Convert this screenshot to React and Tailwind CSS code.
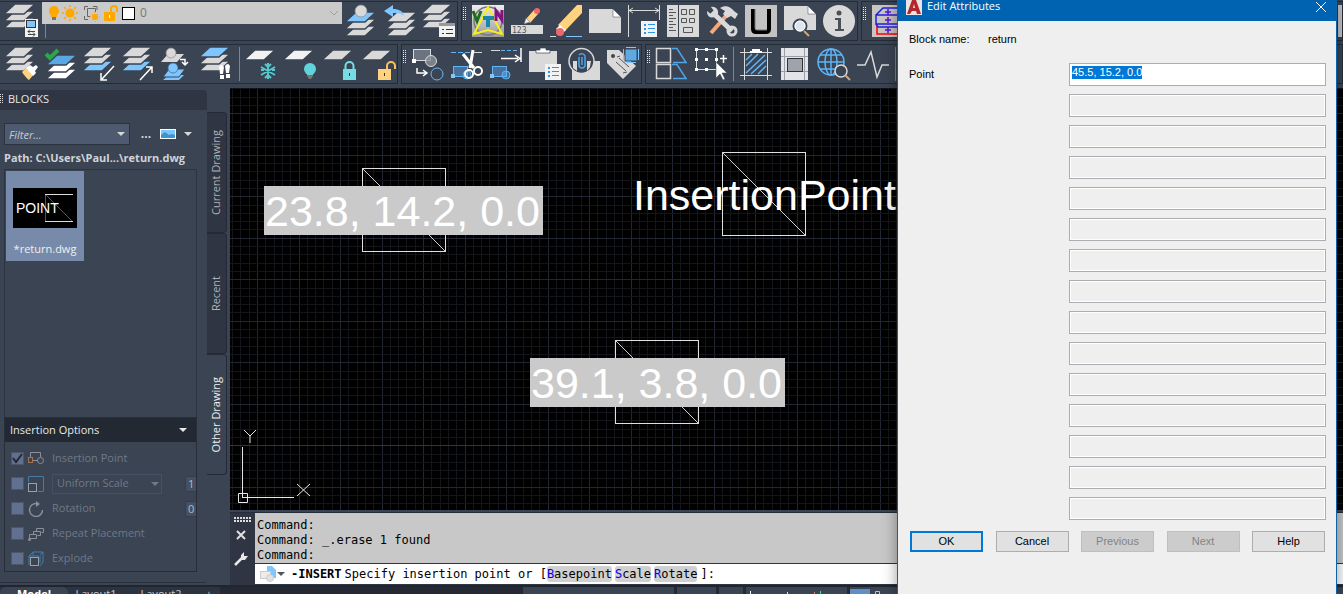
import { useState } from 'react';

const LIGHT = '#d9d9d9';
const BLUE = '#7fc6ff';
const BG = '#3b4453';

function Icon({ children }) {
    return (
        <svg viewBox="0 0 32 32" className="size-8 overflow-visible" fill="none">
            {children}
        </svg>
    );
}

function Sheet({ y, fill, x = 0 }) {
    return (
        <polygon
            points={`${x + 9},${y - 1} ${x + 29},${y - 1} ${x + 18},${y + 9} ${x - 2},${y + 9}`}
            fill={fill}
            stroke={BG}
            strokeWidth="1.5"
        />
    );
}

// three stacked sheets, drawn from the lowest one up
function Stack({ colors = [LIGHT, LIGHT, LIGHT], x = 0, y = 0 }) {
    return [2, 1, 0].map((i) => <Sheet key={i} x={x} y={y + i * 7} fill={colors[i]} />);
}

function List({ x, y, accent = '#2b95e8' }) {
    return (
        <g>
            <rect x={x} y={y} width="16" height="16" fill="#f2f2f2" />
            {[4, 8, 12].map((d) => (
                <g key={d} fill={accent}>
                    <rect x={x + 3} y={y + d - 1} width="2" height="2" />
                    <rect x={x + 7} y={y + d - 1} width="7" height="1" />
                </g>
            ))}
        </g>
    );
}

const LayerProps = (
    <Icon>
        <Stack />
        <rect x="19" y="14" width="13" height="18" fill="#f2f2f2" />
        <rect x="20.500" y="15.500" width="9" height="7" fill={BLUE} stroke="#333" />
        <path d="M22 26.500h7M22 29.500h7M24 24.500l-2 2 2 2M27 27.500l2 2-2 2" stroke="#444" />
    </Icon>
);

const row1a = [
    ['Make object\'s layer current', (
        <Icon>
            <Stack y={8} colors={[BLUE, LIGHT, LIGHT]} x={2} />
            <circle cx="16" cy="6" r="6" fill={LIGHT} stroke="#8a8a8a" strokeWidth=".7" />
        </Icon>
    )],
    ['Layer previous', (
        <Icon>
            <Stack x={4} y={8} />
            <path d="M0 6l9-6v4c6 0 10 2 11 7-3-3-6-3-11-3v4z" fill={BLUE} />
        </Icon>
    )],
    ['Layer states manager', (
        <Icon>
            <Stack />
            <rect x="16" y="18" width="16" height="14" fill="#f2f2f2" />
            <rect x="16" y="18" width="16" height="3" fill="#999" />
            <path d="M19 24.500h2M23 24.500h7M19 28.500h2M23 28.500h7" stroke="#333" />
        </Icon>
    )],
];

const row1b = [
    ['VTN', (
        <Icon>
            <defs>
                <linearGradient id="vtn" x2="0" y2="1">
                    <stop stopColor="#eee" />
                    <stop offset="1" stopColor="#999" />
                </linearGradient>
            </defs>
            <rect width="32" height="32" fill="url(#vtn)" />
            <circle cx="16" cy="16" r="14" stroke="#777" strokeWidth="1.5" />
            <path d="M16 2L30 29 16 25 2 29z" stroke="#f5ef22" strokeWidth="2" />
            <path d="M1 6l4 10L9 6" stroke="#1d6b1d" strokeWidth="3" />
            <path d="M11 13h11M16 13v9" stroke="#1b87a8" strokeWidth="4" />
            <path d="M24 16V6l6 9V5" stroke="#84117f" strokeWidth="3" />
        </Icon>
    )],
    ['Auto number', (
        <Icon>
            <rect y="20" width="32" height="9" fill={LIGHT} />
            <text x="1" y="28" fontSize="8" fontFamily="DejaVu Sans Mono, monospace" fill="#555">123</text>
            <path d="M15 14L23 5l4 4-8 9z" fill="#ffd27f" />
            <path d="M13 19l2-6 4 4z" fill="#eee" stroke="#666" strokeWidth=".5" />
            <circle cx="26" cy="6" r="3" fill="#f0676b" />
        </Icon>
    )],
    ['Erase', (
        <Icon>
            <path d="M32 0v8L15 26l-7-6L27 0z" fill="#ffd27f" />
            <path d="M10 20l6 5-4 4-6-5z" fill="#fff" />
            <circle cx="10" cy="27" r="4" fill="#f0676b" />
            <path d="M0 31.500h6" stroke={LIGHT} />
            <path d="M16 31.500h16" stroke={BLUE} />
        </Icon>
    )],
    ['Wipeout', (
        <Icon>
            <path d="M0 4h24v8h8v16H0z" fill={LIGHT} />
            <path d="M24 4l8 8h-8z" fill="#fff" stroke={BG} strokeWidth=".5" />
        </Icon>
    )],
    ['Dimension style', (
        <Icon>
            <path d="M.5 0v32M31.500 0v15M1 5.500h30M5 3L1 5.500 5 8M27 3l4 2.500L27 8" stroke={LIGHT} />
            <List x={13} y={16} />
        </Icon>
    )],
    ['Design center', (
        <Icon>
            <rect width="11" height="32" fill={LIGHT} />
            <rect x="12" width="20" height="32" fill={LIGHT} />
            <path d="M2 4.500h4M2 7.500h7M2 10.500h4M2 13.500h7M2 16.500h4M2 19.500h7M2 22.500h4M2 25.500h7" stroke="#555" />
            <path d="M14.500 4.500h5v5h-5zM22.500 4.500h5v5h-5zM14.500 13.500h5v4h-5zM22.500 13.500h5v4h-5zM16.500 22.500h9v5h-9z" stroke="#555" />
        </Icon>
    )],
    ['Tools', (
        <Icon>
            <path d="M5 28L20 11" stroke="#f7a87a" strokeWidth="4" />
            <path d="M14 3c5-3 10-2 14 3l4 3-3 5-4-3-4 2-4-4 2-3z" fill={LIGHT} />
            <path d="M6 7L26 26" stroke={LIGHT} strokeWidth="5" />
            <path d="M1 6c0 7 5 7 8 6l3-3c1-5-3-8-7-7l3 4-3 3z" fill={LIGHT} />
            <circle cx="26" cy="26" r="4" stroke={LIGHT} strokeWidth="3" />
        </Icon>
    )],
    ['Undo marks', (
        <Icon>
            <rect width="32" height="32" fill="#c3c3c3" />
            <path d="M8 4v20q0 3 3 3h10q3 0 3-3V4" stroke="#000" strokeWidth="4" />
            <path d="M10 4v19q0 2 2 2h10" stroke="#777" />
        </Icon>
    )],
    ['Find', (
        <Icon>
            <path d="M0 1h24v8h8v16H0z" fill={LIGHT} />
            <path d="M24 1l8 8h-8z" fill="#fff" stroke={BG} strokeWidth=".5" />
            <circle cx="16" cy="21" r="6.500" fill="#dce6ee" stroke={BG} strokeWidth="2" />
            <circle cx="16" cy="21" r="5" stroke="#fff" />
            <path d="M20 26l5 5" stroke="#cda87c" strokeWidth="2" />
        </Icon>
    )],
    ['Information', (
        <Icon>
            <circle cx="16" cy="16" r="16" fill={LIGHT} />
            <circle cx="16" cy="8" r="2.500" fill="#4d5057" />
            <path d="M12 13h6v11h3v2h-9v-2h3v-9h-3z" fill="#4d5057" />
        </Icon>
    )],
];

const Block3d = (
    <Icon>
        <rect width="32" height="32" fill="#c9c5c4" />
        <path d="M5 21V29h26V21" stroke="#f00" strokeWidth="1.500" />
        <path d="M4 10h27v9H4zM4 10l7-7h20M4 19l2 3h25" stroke="#2020e0" strokeWidth="1.500" />
        <path d="M13 7h6M16 4v6M13 15h6M16 12v6M13 25h6M16 22v6" stroke="#5a10e0" strokeWidth="1.500" />
    </Icon>
);

const row2a = [
    ['Layer match', (
        <Icon>
            <Stack />
            <path d="M16 24l6-6 7 7-6 7c-2-1-5-5-7-8z" fill="#ffd27f" />
            <path d="M20 20l4-3 3 2 3-2 2 2-3 4 1 2-3 3z" fill="#fff" />
        </Icon>
    )],
    ['Make current', (
        <Icon>
            <Stack x={3} y={8} colors={['#5aa7e6', '#fff', '#fff']} />
            <path d="M1 6l4 4 8-8" stroke="#27a849" strokeWidth="4" />
        </Icon>
    )],
    ['Copy to layer', (
        <Icon>
            <Stack colors={[LIGHT, LIGHT, BLUE]} />
            <path d="M30 18L18 31M17 25v7h6" stroke="#fff" strokeWidth="1.500" />
        </Icon>
    )],
    ['Move from layer', (
        <Icon>
            <Stack colors={[LIGHT, LIGHT, BLUE]} />
            <path d="M17 32L29 19M23 19h6v6" stroke="#fff" strokeWidth="1.500" />
        </Icon>
    )],
    ['Change to current layer', (
        <Icon>
            <path d="M6 6h16l-7 8H-1z" fill={LIGHT} />
            <circle cx="9" cy="5" r="5" fill={LIGHT} stroke="#888" strokeWidth=".7" />
            <path d="M18 11.500h5v5M20 14l3 3 3-3" stroke="#fff" strokeWidth="1.500" />
            <path d="M7 27h15l-5 5H1z" fill={BLUE} />
            <path d="M7 21h16l-6 8H1z" fill={BLUE} stroke={BG} />
            <circle cx="11" cy="20" r="5" fill={BLUE} stroke="#35688f" strokeWidth=".7" />
        </Icon>
    )],
    ['Layer walk', (
        <Icon>
            <Stack colors={[BLUE, LIGHT, LIGHT]} />
            <path d="M18 19q2-4 5 0l-1 7h-3zM24 18q3-4 5 0l-1 7h-3zM19 27h4v4h-4zM25 26h4v4h-4z" fill="#fff" />
        </Icon>
    )],
];

const row2b = [
    ['Freeze layer', (
        <Icon>
            <Sheet y={3} fill="#f2f2f2" />
            <path d="M22 15v16M15 19l14 8M15 27l14-8M19 16l3 3 3-3M19 30l3-3 3 3M15 22h3M26 22h3" stroke="#58c7cc" strokeWidth="2" />
        </Icon>
    )],
    ['Turn layer off', (
        <Icon>
            <Sheet y={3} fill="#f2f2f2" />
            <circle cx="25" cy="21" r="6" fill="#5fd4dc" />
            <path d="M22 25h6v3l-2 3h-2l-2-3z" fill="#777" />
            <path d="M22 25h6v2h-6z" fill="#5fd4dc" />
        </Icon>
    )],
    ['Lock layer', (
        <Icon>
            <Sheet y={3} fill={LIGHT} />
            <rect x="19" y="21" width="13" height="11" fill="#76dde4" />
            <path d="M21.500 21v-3a4 4 0 018 0v3" stroke="#76dde4" strokeWidth="2" />
            <path d="M25.500 25v3" stroke="#333" />
        </Icon>
    )],
    ['Unlock layer', (
        <Icon>
            <Sheet y={3} fill={LIGHT} />
            <rect x="15" y="21" width="13" height="11" fill="#ffd27f" />
            <path d="M24 21v-3a4 4 0 018 0v3" stroke="#ffc15a" strokeWidth="2" />
            <path d="M21.500 25v3" stroke="#333" />
        </Icon>
    )],
];

const ShapePair = (
    <g>
        <rect x="2.500" y="18.500" width="14" height="10" fill="#4b6f9b" stroke="#5fb5f5" />
        <circle cx="16" cy="27" r="4" fill="#5fb5f5" fillOpacity=".4" stroke="#5fb5f5" />
        <rect y="26" width="4" height="4" fill={BLUE} />
    </g>
);

const row2c = [
    ['Replace block', (
        <Icon>
            <rect x="1.500" y="1.500" width="17" height="11" fill="#6b7380" stroke={LIGHT} />
            <circle cx="19" cy="13" r="5.500" fill="#8a919c" fillOpacity=".8" stroke={LIGHT} />
            <rect y="11" width="4" height="4" fill="#fff" />
            <path d="M5 20v5h9M11 22l4 3-4 3" stroke="#fff" strokeWidth="1.500" />
            <circle cx="25" cy="26" r="6" stroke="#6bb9f5" />
        </Icon>
    )],
    ['Clip reference', (
        <Icon>
            <path d="M0 4.500h20" stroke="#5fb5f5" strokeDasharray="5 2" />
            <path d="M22 4.500h9" stroke={LIGHT} />
            {ShapePair}
            <path d="M12 6l11 14M22 2l-3 18" stroke="#fff" strokeWidth="3" />
            <circle cx="27" cy="23" r="4" stroke="#fff" strokeWidth="2" />
            <circle cx="18" cy="26" r="4" stroke="#fff" strokeWidth="2" />
        </Icon>
    )],
    ['Align block', (
        <Icon>
            <path d="M1 2.500h9" stroke={LIGHT} />
            <path d="M11 2.500h18" stroke="#5fb5f5" strokeDasharray="4 2" />
            <path d="M31 0v14M11 10.500h17M25 7l5 3.500-5 3.500" stroke="#fff" strokeWidth="1.500" />
            {ShapePair}
        </Icon>
    )],
    ['Paste special', (
        <Icon>
            <path d="M0 3h28v21H0z" fill={LIGHT} />
            <path d="M7 5V2h4V0h6v2h4v3z" fill="#fff" stroke={BG} strokeWidth=".7" />
            <List x={16} y={16} />
        </Icon>
    )],
    ['Attach', (
        <Icon>
            <path d="M4 13h28v19H4z" fill={LIGHT} />
            <circle cx="13.500" cy="13" r="12.500" fill={BG} stroke={LIGHT} strokeWidth="1.500" />
            <path d="M5 13h4v10l-4-3zM19 13h4l-1 6-3 4z" fill={LIGHT} />
            <path d="M11 9v8a3 3 0 006 0V8a3.500 3.500 0 00-6-1M14 9v8" stroke="#4ea4e6" strokeWidth="1.500" />
        </Icon>
    )],
    ['Tag', (
        <Icon>
            <path d="M0 2h12l17 16-13 13L0 15z" fill={LIGHT} />
            <circle cx="6" cy="8" r="2" fill="#444" />
            <path d="M12 10l10 9M9 14l10 9M10 9l3-1M16 25l4-1" stroke="#555" />
            <rect x="18" y="1" width="12" height="12" fill="#5fa9e3" stroke={BG} />
            <path d="M16.500 1v11M31.500 1v11M19 -.5h10M19 14.500h10" stroke={BLUE} />
        </Icon>
    )],
];

const row2d = [
    ['Quick view', (
        <Icon>
            <path d="M.5 .5h14v14H.5zM.5 16.500h14v14H.5z" stroke={LIGHT} strokeWidth="1.500" />
            <path d="M16 .5h5l9 14H17M16 16.500h5l9 14H17" stroke="#4ea4e6" strokeWidth="1.500" />
        </Icon>
    )],
    ['Select region', (
        <Icon>
            <rect x="1.500" y="1.500" width="20" height="20" stroke={LIGHT} />
            <path d="M0 0h3v3H0zM10 0h3v3h-3zM20 0h3v3h-3zM0 10h3v3H0zM0 20h3v3H0zM10 20h3v3h-3zM10 10h3v3h-3zM20 10h3v3h-3z" fill="#fff" />
            <path d="M28.500 7v8M25 10.500h7" stroke="#fff" strokeWidth="1.500" />
            <path d="M21 14v16l4-4 3 6 2-1-3-6h5z" fill="#fff" stroke={BG} strokeWidth=".5" />
        </Icon>
    )],
];

const row2e = [
    ['Hatch clip', (
        <Icon>
            <path d="M4.500 0v32M27.500 0v32M0 4.500h32M0 27.500h32" stroke={LIGHT} />
            <path d="M6 12l6-6M6 18L18 6M6 25L25 7M11 26l15-14M18 26l8-8" stroke="#5fb5f5" strokeWidth="1.500" />
            <path d="M10 5V3h2V1h8v2h2v2z" fill="#fff" />
        </Icon>
    )],
    ['Viewport', (
        <Icon>
            <rect x="2" width="27" height="32" fill="#e2e4e8" />
            <path d="M5.500 0v32M25.500 0v32M2 8.500h27M2 23.500h27" stroke="#9a9ea6" />
            <rect x="8.500" y="10.500" width="15" height="13" fill="#9ea3ac" stroke="#333" />
        </Icon>
    )],
    ['Geographic location', (
        <Icon>
            <g stroke="#5fb5f5" strokeWidth="1.500">
                <circle cx="13" cy="14" r="13" />
                <ellipse cx="13" cy="14" rx="6" ry="13" />
                <path d="M13 1v26M0 14h26M2 7h22M2 21h22" />
            </g>
            <circle cx="23" cy="23" r="6" fill={BG} stroke={LIGHT} strokeWidth="1.500" />
            <path d="M27 27l5 5" stroke="#d0a878" strokeWidth="2" />
        </Icon>
    )],
    ['Signal', (
        <Icon>
            <path d="M0 17h8l6-13 6 25 5-12h7" stroke={LIGHT} strokeWidth="1.500" />
        </Icon>
    )],
];

function ToolButtons({ items }) {
    return (
        <div className="flex gap-[7px]">
            {items.map(([label, icon]) => (
                <button key={label} type="button" aria-label={label} title={label} className="shrink-0">
                    {icon}
                </button>
            ))}
        </div>
    );
}

function Grip() {
    return (
        <svg viewBox="0 0 3 15" className="w-[3px] h-[15px] mb-[14px] shrink-0">
            {[0, 2, 4, 6, 8, 10, 12].map((y) => (
                <path key={y} d={`M0 ${y + 0.5}h1M2 ${y + 0.5}h1`} stroke="#e6e6e6" />
            ))}
        </svg>
    );
}

function Divider() {
    return <div className="w-px h-[34px] bg-[#7c8594] shrink-0" />;
}

function Toolbar({ children, className = '' }) {
    return (
        <div className={`flex items-center h-10 border border-[#242c38] ${className}`}>
            {children}
        </div>
    );
}

function LayerSelect() {
    return (
        <div className="self-stretch w-[300px] shrink-0 ml-1 mr-[3px]">
            <button type="button" aria-label="Layer" className="flex items-center w-full h-[22px] pl-[6px] bg-[#cacaca] text-[#777]">
                <svg viewBox="0 0 88 18" className="w-[88px] h-[18px]" fill="none">
                    <circle cx="6" cy="7" r="5" fill="#ffa800" />
                    <path d="M3 10h6v3H3z" fill="#ffa800" />
                    <path d="M4 13h4v3H4z" fill="#777" />
                    <circle cx="22" cy="9" r="4.500" fill="#ffa800" />
                    <path d="M22 1v2M22 15v2M14 9h2M28 9h2M16 3l2 2M28 3l-2 2M16 15l2-2M28 15l-2-2" stroke="#ffa800" strokeWidth="1.500" />
                    <path d="M36.500 6V2.500H40M45 2.500h4V6M36.500 12v3.500H40" stroke="#666" />
                    <path d="M47.500 8V4.500h-8v8H42" stroke="#666" />
                    <circle cx="47" cy="13" r="3" fill="#ffa800" />
                    <path d="M47 8v1M47 17v1M42 13h1M51 13h1M44 10l1 1M50 10l-1 1M44 16l1-1M50 16l-1-1" stroke="#ffa800" />
                    <rect x="56" y="8" width="11" height="9" fill="#ffa800" />
                    <path d="M63 8V5a3 3 0 016 0v3" stroke="#ffa800" strokeWidth="2" />
                    <path d="M61.500 11v3" stroke="#fff" />
                    <rect x="74.500" y="3.500" width="12" height="12" fill="#fff" stroke="#000" />
                </svg>
                <span className="ml-1 text-xs">0</span>
                <svg viewBox="0 0 8 6" className="w-2 h-[6px] ml-auto mr-1" fill="none">
                    <path d="M0 1l4 4 4-4" stroke="#a0a0a0" />
                </svg>
            </button>
            <div className="w-px h-[14px] ml-[3px] bg-[#7c8594]" />
        </div>
    );
}

function Toolbars() {
    return (
        <div className="flex flex-col gap-[3px] pt-px overflow-hidden">
            <div className="flex gap-[3px]">
                <Toolbar className="pl-[6px] pr-[2px] shrink-0 border-l-0">
                    <button type="button" aria-label="Layer properties" className="shrink-0">{LayerProps}</button>
                    <LayerSelect />
                    <ToolButtons items={row1a} />
                </Toolbar>
                <Toolbar className="pl-px pr-[2px] gap-[6px] shrink-0">
                    <Grip />
                    <ToolButtons items={row1b} />
                </Toolbar>
                <Toolbar className="pl-px gap-[6px] flex-1">
                    <Grip />
                    {Block3d}
                    <div className="ml-auto w-[6px] h-8 bg-[#c9c5c4] border-l-2 border-[#2020e0]" />
                </Toolbar>
            </div>
            <div className="flex gap-[3px]">
                <Toolbar className="pl-[6px] pr-[2px] gap-[6px] shrink-0 border-l-0">
                    <ToolButtons items={row2a} />
                    <Divider />
                    <ToolButtons items={row2b} />
                </Toolbar>
                <Toolbar className="pl-px pr-[2px] gap-[6px] shrink-0">
                    <Grip />
                    <ToolButtons items={row2c} />
                </Toolbar>
                <Toolbar className="pl-px gap-[6px] flex-1">
                    <Grip />
                    <ToolButtons items={row2d} />
                    <Divider />
                    <ToolButtons items={row2e} />
                    <Divider />
                </Toolbar>
            </div>
        </div>
    );
}

function Caret({ className = '' }) {
    return (
        <svg viewBox="0 0 8 4" className={`w-2 h-1 shrink-0 ${className}`}>
            <path d="M0 0h8L4 4z" fill="currentColor" />
        </svg>
    );
}

const optionIcons = {
    point: (
        <svg viewBox="0 0 16 16" className="size-4" fill="none">
            <path d="M2.500 7V1.500h10V6M5 9.500h5" stroke="#8a8f98" />
            <rect x=".5" y="6.500" width="4" height="5" stroke="#a5714f" />
            <circle cx="12.500" cy="9.500" r="3" stroke="#8a8f98" />
        </svg>
    ),
    scale: (
        <svg viewBox="0 0 16 16" className="size-4" fill="none">
            <path d="M.5 6V.5h15v15H10" stroke="#477ca5" />
            <rect x=".5" y="7.500" width="8" height="8" stroke="#9aa0a8" />
        </svg>
    ),
    rotation: (
        <svg viewBox="0 0 16 16" className="size-4" fill="none">
            <path d="M9 2.500A6.500 6.500 0 1014.500 9" stroke="#8a8f98" strokeWidth="1.500" />
            <path d="M8 0l4 3-4 3z" fill="#8a8f98" />
        </svg>
    ),
    repeat: (
        <svg viewBox="0 0 16 16" className="size-4" fill="none">
            <path d="M1.500 13V8.500h7v4h-7M5.500 8V5.500h7v4h-3M8.500 5V2.500h7v4h-2" stroke="#8a8f98" />
            <circle cx="1.500" cy="13.500" r="1.500" fill="#8a8f98" />
        </svg>
    ),
    explode: (
        <svg viewBox="0 0 16 16" className="size-4" fill="none">
            <path d="M1 5l4-4h10v10l-3 4M5 1v3M12 4l3-3M12 5v7M1 14V5h10" stroke="#477ca5" />
            <rect x="2.500" y="6.500" width="8" height="8" stroke="#9aa0a8" />
        </svg>
    ),
};

function OptionRow({ id, label, checked = false, children }) {
    return (
        <div className="flex items-center h-[25px] pl-[6px] text-[#6f7988]">
            <span className="relative flex">
                <input
                    id={id}
                    type="checkbox"
                    defaultChecked={checked}
                    disabled
                    aria-label={label}
                    className="peer appearance-none size-[13px] bg-[#617090] border border-[#4b566b]"
                />
                <svg viewBox="0 0 13 13" className="absolute inset-0 hidden peer-checked:block" fill="none">
                    <path d="M2 6l3 4 6-8" stroke="#222933" strokeWidth="2" />
                </svg>
            </span>
            <span className="ml-1">{optionIcons[id]}</span>
            {children || <label htmlFor={id} className="ml-2">{label}</label>}
        </div>
    );
}

function NumberBox({ value, label }) {
    return (
        <div className="ml-auto w-[11px] h-4 overflow-hidden bg-[#465064] border border-r-0 border-[#343d4b]">
            <input aria-label={label} defaultValue={value} disabled className="block w-6 pl-[2px] leading-[14px] text-[#b5bbc5]" />
        </div>
    );
}

function InsertionOptions() {
    return (
        <section className="border border-[#272e3a]">
            <button type="button" className="flex items-center w-full h-6 pl-[5px] pr-[9px] bg-[#222933] text-[#e8e8e8]">
                Insertion Options
                <Caret className="ml-auto" />
            </button>
            <div className="pt-1">
                <OptionRow id="point" label="Insertion Point" checked />
                <OptionRow id="scale" label="Scale">
                    <div className="relative ml-2">
                        <select disabled aria-label="Scale mode" className="appearance-none w-[110px] h-5 pl-1 border border-[#465064] opacity-100">
                            <option>Uniform Scale</option>
                        </select>
                        <Caret className="absolute right-[3px] top-2 pointer-events-none" />
                    </div>
                    <NumberBox value="1" label="Scale factor" />
                </OptionRow>
                <OptionRow id="rotation" label="Rotation">
                    <label htmlFor="rotation" className="ml-2">Rotation</label>
                    <NumberBox value="0" label="Rotation angle" />
                </OptionRow>
                <OptionRow id="repeat" label="Repeat Placement" />
                <OptionRow id="explode" label="Explode" />
            </div>
        </section>
    );
}

function BlocksPanel() {
    const [filter, setFilter] = useState('');

    return (
        <div className="flex flex-col w-[207px] text-[11px] border-b border-[#2a313d] rounded-br-[4px]">
            <header className="flex items-center h-5 pb-[2px] gap-[5px] bg-[#2f3542] text-[#e8e8e8] rounded-tr-[4px]">
                <svg viewBox="0 0 3 10" className="w-[3px] h-[10px]">
                    <path d="M.5 0v10M2.500 0v10" stroke="#ddd" strokeDasharray="1 1" />
                </svg>
                <h2>BLOCKS</h2>
            </header>
            <div className="flex flex-col flex-1 pl-1 pr-[10px] pt-[13px] pb-[10px]">
                <div className="flex items-center text-[#d8d8d8]">
                    <div className="relative">
                        <input
                            type="text"
                            aria-label="Filter"
                            placeholder="Filter..."
                            value={filter}
                            onChange={(e) => setFilter(e.target.value)}
                            className="block w-[126px] h-[22px] pl-1 bg-[#4d5a70] border border-[#2b3340] italic placeholder:text-[#c6c9ce]"
                        />
                        <Caret className="absolute right-[5px] top-[9px]" />
                    </div>
                    <button type="button" className="ml-[10px] w-3 text-xs font-bold leading-4">...</button>
                    <button type="button" aria-label="View" className="flex items-center ml-2 gap-2">
                        <svg viewBox="0 0 16 10" className="w-4 h-[10px]">
                            <rect width="16" height="10" fill="#fff" />
                            <rect x="1" y="1" width="14" height="8" fill={BLUE} />
                            <path d="M1 6l4-3 4 3 3-1 3 1v3H1z" fill="#3a94d0" />
                        </svg>
                        <Caret />
                    </button>
                </div>
                <p className="mt-1 h-5 leading-[18px] font-bold whitespace-nowrap text-[#d0d3d8]">
                    Path: C:\Users\Paul...\return.dwg
                </p>
                <div className="flex-1 border border-b-0 border-[#2d3441] p-px">
                    <figure className="flex flex-col items-center w-[78px] h-[90px] pt-[17px] bg-[#778aa9] text-[#f0f0f0]">
                        <svg viewBox="0 0 64 40" className="w-16 h-10 bg-black" fill="none">
                            <path d="M32.500 6.500L60 34M32.500 7v27" stroke="#555" />
                            <path d="M32 6.500h28M32 33.500h28" stroke="#ddd" />
                            <text x="3" y="25" fontSize="14" fill="#fff" fontFamily="Liberation Sans, sans-serif">POINT</text>
                        </svg>
                        <figcaption className="mt-[13px]">*return.dwg</figcaption>
                    </figure>
                </div>
                <InsertionOptions />
            </div>
        </div>
    );
}

function SideTabs() {
    const tabs = ['Current Drawing', 'Recent', 'Other Drawing'];
    const [active, setActive] = useState('Other Drawing');

    return (
        <div role="tablist" className="flex flex-col w-5 pt-[22px] text-[11px]">
            {tabs.map((t) => (
                <button
                    key={t}
                    type="button"
                    role="tab"
                    aria-selected={t === active}
                    onClick={() => setActive(t)}
                    className={`flex items-center justify-center h-[121px] border border-l-0 border-[#242b37] rounded-r-[4px] ${
                        t === active ? 'text-[#f0f0f0]' : 'bg-[#2f3542] text-[#aeb2b9]'
                    }`}
                >
                    <span className="[writing-mode:vertical-rl] rotate-180 whitespace-nowrap">{t}</span>
                </button>
            ))}
        </div>
    );
}

const STEP = 8.3;
const gridLines = (start, count) =>
    Array.from({ length: count }, (_, i) => ({ at: Math.round(start + i * STEP) + 0.5, major: i % 5 === 0 }));
const columns = gridLines(-14.5, 170);
const rows = gridLines(-16.3, 90);

function BlockRef({ x, y, text, textX, width }) {
    return (
        <g>
            <rect x={x + 0.5} y={y + 0.5} width="83" height="83" stroke="#e0e0e0" />
            <path d={`M${x} ${y}l84 84`} stroke="#d0d0d0" />
            {width && <rect x={textX - 1} y={y + 18} width={width} height="49" fill="#cacaca" />}
            <text x={textX} y={y + 58} fontSize="43" fill="#fff" fontFamily="Liberation Sans, sans-serif">
                {text}
            </text>
        </g>
    );
}

function Drawing() {
    return (
        <div className="relative flex-1 bg-black overflow-hidden">
            <svg className="absolute inset-0 w-full h-full" fill="none">
                {columns.map((l) => (
                    <line key={l.at} x1={l.at} x2={l.at} y1="0" y2="100%" stroke={l.major ? '#232734' : '#14151a'} />
                ))}
                {rows.map((l) => (
                    <line key={l.at} x1="0" x2="100%" y1={l.at} y2={l.at} stroke={l.major ? '#232734' : '#14151a'} />
                ))}
                <line x1="0" x2="100%" y1="357.500" y2="357.500" stroke="#6e1c20" />
                <BlockRef x={132} y={80} text="23.8, 14.2, 0.0" textX={35} width={279} />
                <BlockRef x={492} y={64} text="InsertionPoint" textX={403} />
                <BlockRef x={385} y={252} text="39.1, 3.8, 0.0" textX={301} width={255} />
            </svg>
            <svg viewBox="0 0 78 76" className="absolute left-[6px] bottom-[6px] w-[78px] h-[76px]" fill="none">
                <path d="M6.500 19v51M6 69.500h52M2.500 65.500h9v9h-9z" stroke="#e8e8e8" />
                <path d="M8 2l6 6 6-6M14 8v7M61 56l13 12M74 56L61 68" stroke="#e8e8e8" />
            </svg>
        </div>
    );
}

function Option({ name }) {
    return (
        <button type="button" className="h-4 leading-4 rounded-[3px] bg-[#d0d0d0] mr-[3px]">
            <span className="text-[#0000e6]">{name[0]}</span>
            {name.slice(1)}
        </button>
    );
}

function CommandLine() {
    return (
        <div className="flex h-[73px] mt-[2px] border-t border-[#242c38] bg-[#2f3542] font-['DejaVu_Sans_Mono',monospace] text-xs text-black">
            <div className="flex flex-col items-start w-[25px] pt-1 pl-1 text-white shrink-0">
                <svg viewBox="0 0 17 5" className="w-[17px] h-[5px]">
                    <path d="M0 1h17M0 4h17" stroke="#ddd" strokeWidth="2" strokeDasharray="2 1" />
                </svg>
                <button type="button" aria-label="Close" className="mt-2 ml-[2px]">
                    <svg viewBox="0 0 10 10" className="size-[10px]" fill="none">
                        <path d="M1 1l8 8M9 1L1 9" stroke="#e0e0e0" strokeWidth="2" />
                    </svg>
                </button>
                <button type="button" aria-label="Customize" className="mt-3">
                    <svg viewBox="0 0 14 14" className="size-[14px]" fill="none">
                        <path d="M1 13l7-7" stroke="#e8e8e8" strokeWidth="2.500" />
                        <path d="M7 3l3-3v4h4l-3 4H7z" fill="#e8e8e8" />
                    </svg>
                </button>
            </div>
            <div className="flex flex-col flex-1 min-w-0">
                <pre className="h-[50px] pt-[5px] pl-[2px] leading-[15px] bg-[#c8c8c8] font-['DejaVu_Sans_Mono',monospace]">
                    {'Command:\nCommand: _.erase 1 found\nCommand:'}
                </pre>
                <div className="flex items-center h-5 mt-px pl-[5px] bg-white whitespace-pre">
                    <svg viewBox="0 0 16 16" className="size-4" fill="none">
                        <path d="M7 0h5l4 4v8H7z" fill={BLUE} />
                        <rect x=".5" y="5.500" width="10" height="7" fill="#ececec" stroke="#ccc" />
                        <circle cx="10" cy="12" r="3.500" fill="#e2e2e2" stroke="#ccc" />
                    </svg>
                    <Caret className="ml-[1px] text-[#555]" />
                    <span className="ml-[6px] font-bold">-INSERT</span>
                    <span className="ml-[3px]">Specify insertion point or [</span>
                    <Option name="Basepoint" />
                    <Option name="Scale" />
                    <Option name="Rotate" />
                    <span>]:</span>
                </div>
            </div>
        </div>
    );
}

function StatusBar() {
    return (
        <footer className="flex h-[9px] overflow-hidden bg-[#242933] border-t-2 border-[#20262f] text-[11px] text-[#c5c8cd]">
            <nav className="flex w-[220px] shrink-0 bg-[#2d3441] leading-[13px]">
                <button type="button" className="w-[68px] h-[13px] font-bold text-white bg-[#3b4453] rounded-t-[6px]">Model</button>
                <button type="button" className="w-[56px] h-[13px]">Layout1</button>
                <button type="button" className="w-[74px] h-[13px]">Layout2</button>
                <button type="button" className="w-[22px] h-[13px]">+</button>
            </nav>
            <div className="w-[303px] shrink-0" />
            <div className="flex flex-1 h-[9px] gap-[3px]">
                <div className="w-[151px] bg-[#3b4453]" />
                <div className="w-[39px] bg-[#3b4453]" />
                <div className="w-6 bg-[#3b4453]" />
                <div className="w-[101px] bg-[#3b4453]">
                    <svg viewBox="0 0 101 7" className="w-[101px] h-[7px]">
                        <path d="M4.500 4v3" stroke="#fff" />
                        <path d="M41.500 5v2" stroke="#ddd" />
                        <path d="M68.500 5v2" stroke="#e07a7a" />
                        <path d="M74.500 4v3" stroke="#4bd87a" />
                    </svg>
                </div>
                <div className="flex-1 bg-[#3b4453]">
                    <svg viewBox="0 0 60 7" className="w-[60px] h-[7px]" fill="none">
                        <rect y="2" width="20" height="5" fill="#5f8fc4" />
                        <path d="M25.500 7V4.500h4V7" stroke="#f7b07a" />
                    </svg>
                </div>
            </div>
        </footer>
    );
}

function AttributesDialog() {
    const [values, setValues] = useState(['45.5, 15.2, 0.0', ...Array(14).fill('')]);
    const buttonBase = 'w-[73px] h-[21px] border';

    function change(i, value) {
        setValues((prev) => prev.map((v, n) => (n === i ? value : v)));
    }

    return (
        <div
            role="dialog"
            aria-label="Edit Attributes"
            className="absolute top-0 bottom-0 right-[6px] w-[440px] flex flex-col bg-[#efefef] border-x border-[#0e63a8] shadow-[0_0_14px_rgba(0,0,0,0.4)] font-['Liberation_Sans',Arial,sans-serif] text-[11px] text-black overflow-hidden"
        >
            <header className="flex items-center h-[21px] pb-2 pl-2 pr-[9px] bg-[#0063b1] text-white font-['Open_Sans',sans-serif] shrink-0">
                <svg viewBox="0 0 16 16" className="size-4" fill="none">
                    <rect width="16" height="16" fill="#ece4e2" />
                    <path d="M1 15L6 1h4l5 14h-4l-1-3H6l-2 3z" fill="#b3282d" />
                    <path d="M7 9l1-4 1 4z" fill="#ece4e2" />
                </svg>
                <h1 className="ml-[5px]">Edit Attributes</h1>
                <button type="button" aria-label="Close" className="ml-auto">
                    <svg viewBox="0 0 12 12" className="size-3" fill="none">
                        <path d="M1 1l10 10M11 1L1 11" stroke="#fff" />
                    </svg>
                </button>
            </header>
            <form className="pl-[11px] pr-[10px]" onSubmit={(e) => e.preventDefault()}>
                <p className="flex h-[42px] pt-[11px] leading-[14px]">
                    <span className="w-[79px]">Block name:</span>
                    <span>return</span>
                </p>
                <ul className="flex flex-col gap-2">
                    {values.map((v, i) => (
                        <li key={i} className="flex items-center">
                            <label htmlFor={`attr-${i}`} className="flex-1">{i === 0 && 'Point'}</label>
                            {i === 0 ? (
                                <span className="relative flex">
                                    <input
                                        id="attr-0"
                                        value={v}
                                        onChange={(e) => change(0, e.target.value)}
                                        className="w-[257px] h-[23px] pl-[2px] pb-[3px] bg-white border border-[#abadb3] text-transparent caret-black"
                                    />
                                    <span aria-hidden="true" className="absolute left-[3px] top-[3px] leading-[13px] bg-[#0078d7] text-white pointer-events-none">
                                        {v}
                                    </span>
                                </span>
                            ) : (
                                <input
                                    id={`attr-${i}`}
                                    value={v}
                                    disabled
                                    aria-label={`Attribute ${i + 1}`}
                                    onChange={(e) => change(i, e.target.value)}
                                    className="w-[257px] h-[23px] bg-[#efefef] border border-[#abadb3] shadow-[inset_0_0_0_1px_#fff]"
                                />
                            )}
                        </li>
                    ))}
                </ul>
                <div className="flex justify-between mt-[11px] pl-px pr-px">
                    <button type="submit" className="w-[73px] h-[21px] bg-[#e1e1e1] border-2 border-[#0078d7]">OK</button>
                    <button type="button" className={`${buttonBase} bg-[#e1e1e1] border-[#adadad]`}>Cancel</button>
                    <button type="button" disabled className={`${buttonBase} bg-[#cccccc] border-[#bfbfbf] text-[#838383]`}>Previous</button>
                    <button type="button" disabled className={`${buttonBase} bg-[#cccccc] border-[#bfbfbf] text-[#838383]`}>Next</button>
                    <button type="button" className={`${buttonBase} bg-[#e1e1e1] border-[#adadad]`}>Help</button>
                </div>
            </form>
        </div>
    );
}

export default function App() {
    return (
        <div className="relative flex flex-col h-screen overflow-hidden bg-[#3b4453] font-['Open_Sans','Noto_Sans',sans-serif]">
            <Toolbars />
            <main className="flex flex-1 min-h-0">
                <aside className="flex w-[230px] pt-[6px] pb-[2px] shrink-0">
                    <BlocksPanel />
                    <SideTabs />
                </aside>
                <div className="flex flex-col flex-1 min-w-0 pt-1">
                    <Drawing />
                    <CommandLine />
                </div>
            </main>
            <StatusBar />
            <AttributesDialog />
        </div>
    );
}
